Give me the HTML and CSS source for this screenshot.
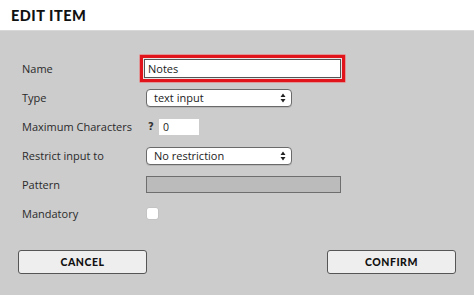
FILE: index.html
```html
<!DOCTYPE html>
<html>
<head>
<meta charset="utf-8">
<link rel="stylesheet" href="styles.css">
</head>
<body>
<div class="dialog">
  <div class="header">EDIT ITEM</div>
  <div class="panel">
    <div class="form">
      <div class="label">Name</div>
      <div class="ctl"><div class="name-wrap"><div class="text-input">Notes</div></div></div>

      <div class="label">Type</div>
      <div class="ctl"><div class="select"><span>text input</span>
        <svg class="arrows" width="6" height="10" viewBox="0 0 6 10"><path d="M0.5 4 L3 0.5 L5.5 4 Z M0.5 6 L3 9.5 L5.5 6 Z" fill="#222"/></svg></div></div>

      <div class="label">Maximum Characters</div>
      <div class="ctl"><span class="help">?</span><div class="num-input">0</div></div>

      <div class="label">Restrict input to</div>
      <div class="ctl"><div class="select"><span>No restriction</span>
        <svg class="arrows" width="6" height="10" viewBox="0 0 6 10"><path d="M0.5 4 L3 0.5 L5.5 4 Z M0.5 6 L3 9.5 L5.5 6 Z" fill="#222"/></svg></div></div>

      <div class="label">Pattern</div>
      <div class="ctl"><div class="pattern"></div></div>

      <div class="label">Mandatory</div>
      <div class="ctl"><div class="checkbox"></div></div>
    </div>
    <div class="buttons">
      <div class="btn">CANCEL</div>
      <div class="btn">CONFIRM</div>
    </div>
  </div>
</div>
</body>
</html>
```
FILE: styles.css
```css
html, body {
  margin: 0;
  padding: 0;
}
body {
  width: 474px;
  height: 295px;
  overflow: hidden;
  background: #cccccc;
  font-family: "Open Sans", "Liberation Sans", sans-serif;
  color: #222;
}
.dialog {
  display: flex;
  flex-direction: column;
  height: 295px;
}
.header {
  height: 31px;
  background: #ffffff;
  display: flex;
  align-items: center;
  padding-left: 11px;
  font-family: Lato, "DejaVu Sans", sans-serif;
  font-weight: 900;
  font-size: 14.5px;
  letter-spacing: 0.5px;
  color: #111;
  border-bottom: 1px solid #d8d8d8;
  box-sizing: border-box;
}
.panel {
  flex: 1;
  background: #cccccc;
  padding: 23px 18px 0 18px;
}
.form {
  display: grid;
  grid-template-columns: 128px 1fr;
  grid-auto-rows: 29px;
}
.label {
  display: flex;
  align-items: center;
  padding-left: 4px;
  font-size: 11px;
  color: #2a2a2a;
}
.ctl {
  display: flex;
  align-items: center;
}
.name-wrap {
  margin-left: -6px;
  padding: 1px;
  background: #e6e6e6;
  border: 3px solid #e2141b;
  box-shadow: 0 0 0 0.5px #f06060;
}
.text-input {
  width: 192px;
  height: 17px;
  border: 1px solid #555;
  background: #fff;
  font-size: 11px;
  line-height: 17px;
  padding-left: 3px;
  box-sizing: content-box;
}
.select {
  border: 1px solid #6a6a6a;
  border-radius: 4px;
  background: #fff;
  display: flex;
  align-items: center;
  justify-content: space-between;
  padding: 0 5px 0 7px;
  box-sizing: border-box;
  width: 146px;
  height: 18px;
  font-size: 11px;
  box-shadow: 0 1px 0 rgba(0,0,0,0.1);
}
.arrows {
  display: block;
}
.help {
  font-family: "DejaVu Sans", sans-serif;
  font-weight: bold;
  font-size: 10px;
  color: #333;
  width: 10px;
  margin-left: 0;
  margin-right: 3px;
  text-align: center;
}
.num-input {
  width: 40px;
  height: 16px;
  background: #fff;
  font-size: 10.5px;
  line-height: 16px;
  padding-left: 4px;
  box-sizing: border-box;
}
.pattern {
  width: 195px;
  height: 17px;
  background: #bbbbbb;
  border: 1px solid #6e6e6e;
  box-sizing: border-box;
}
.checkbox {
  width: 11px;
  height: 11px;
  margin-left: 1px;
  background: #fff;
  border-radius: 2px;
  box-shadow: 0 0 0 0.5px #bbb;
}
.buttons {
  display: flex;
  justify-content: space-between;
  margin-top: 22px;
}
.btn {
  width: 129px;
  height: 24px;
  box-sizing: border-box;
  border: 1px solid #555;
  border-radius: 3px;
  background: #eeeeee;
  display: flex;
  align-items: center;
  justify-content: center;
  font-family: Lato, "DejaVu Sans", sans-serif;
  font-weight: 900;
  font-size: 10.5px;
  letter-spacing: 0.5px;
  color: #111;
}
```
